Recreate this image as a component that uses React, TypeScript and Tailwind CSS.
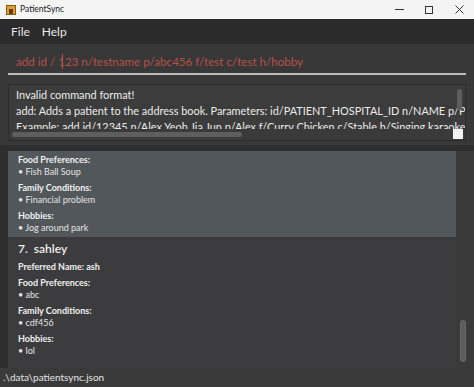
import React from "react";

const font = { fontFamily: 'Lato, "Noto Sans", sans-serif' };

function Field({ label, value }: { label: string; value?: string }) {
  return (
    <div className="mb-[4px]">
      <div className="text-[9px] leading-[12px] font-bold text-[#f0f0f0]">{label}</div>
      {value && <div className="text-[9px] leading-[12px] text-[#e4e4e4]">• {value}</div>}
    </div>
  );
}

export default function App() {
  return (
    <div className="w-[474px] h-[387px] flex flex-col overflow-hidden bg-[#2f2f2f]" style={font}>
      {/* title bar */}
      <div className="h-[19px] bg-[#f4f4f4] flex items-center pl-[6px] shrink-0">
        <div className="w-[10px] h-[10px] bg-[#e0a030] border border-[#8a5a10] flex items-end justify-center">
          <div className="w-[4px] h-[5px] bg-[#6b3d0a]" />
        </div>
        <span className="ml-[4px] text-[8.5px] text-[#1a1a1a]">PatientSync</span>
        <div className="ml-auto flex items-center h-full text-[#222]">
          <div className="w-[30px] flex justify-center">
            <div className="w-[9px] h-px bg-[#333]" />
          </div>
          <div className="w-[30px] flex justify-center">
            <div className="w-[8px] h-[8px] border border-[#333]" />
          </div>
          <div className="w-[30px] flex justify-center">
            <svg width="9" height="9" viewBox="0 0 9 9" stroke="#333" strokeWidth="1">
              <path d="M0.5 0.5 L8.5 8.5 M8.5 0.5 L0.5 8.5" />
            </svg>
          </div>
        </div>
      </div>

      {/* menu */}
      <div className="h-[25px] bg-[#2b2b2b] flex items-center gap-[12px] pl-[11px] text-[12px] text-[#e8e8e8] shrink-0">
        <span>File</span>
        <span>Help</span>
      </div>

      {/* command box */}
      <div className="h-[36px] bg-[#383838] px-[8px] pt-[6px] shrink-0">
        <div className="h-[25px] border-b-2 border-[#bdbdbd] pl-[8px] flex items-center text-[11.6px] text-[#b8504a]">
          <span>add id / 1</span>
          <span className="w-px h-[15px] bg-[#c0504a] -ml-[3px] mr-[2px]" />
          <span>23 n/testname p/abc456 f/test c/test h/hobby</span>
        </div>
      </div>

      {/* result display */}
      <div className="h-[65px] bg-[#383838] px-[8px] pt-[4px] pb-[4px] shrink-0">
        <div className="relative h-full bg-[#3c3c3c] border border-[#2c2c2c] overflow-hidden">
          <div className="pl-[7px] pt-[2px] text-[10.9px] leading-[16px] text-[#ececec] whitespace-nowrap">
            <div>Invalid command format!</div>
            <div>add: Adds a patient to the address book. Parameters: id/PATIENT_HOSPITAL_ID n/NAME p/P</div>
            <div>Example: add id/12345 n/Alex Yeoh Jia Jun p/Alex f/Curry Chicken c/Stable h/Singing karaoke</div>
          </div>
          <div className="absolute left-0 right-0 bottom-0 h-[11px] bg-[#3a3a3a] flex items-center px-[3px]">
            <div className="w-[230px] h-[5px] rounded-full bg-[#5e5e5e]" />
          </div>
          <div className="absolute right-[3px] top-[4px] w-[5px] h-[21px] rounded-full bg-[#5e5e5e]" />
          <div className="absolute right-[2px] bottom-[1px] w-[10px] h-[10px] bg-[#f2f2f2]" />
        </div>
      </div>

      {/* list */}
      <div className="flex-1 min-h-0 bg-[#2e2e2e] pt-[6px] flex">
        <div className="flex-1 pl-[8px] overflow-hidden flex flex-col">
          <div className="bg-[#52575b] pl-[10px] pt-[3px] h-[86px] shrink-0">
            <Field label="Food Preferences:" value="Fish Ball Soup" />
            <Field label="Family Conditions:" value="Financial problem" />
            <Field label="Hobbies:" value="Jog around park" />
          </div>
          <div className="bg-[#3c3c3e] pl-[10px] pt-[3px] flex-1">
            <div className="text-[12px] leading-[17px] font-semibold text-[#f0f0f0] mb-[4px]">
              7.&nbsp;&nbsp;sahley
            </div>
            <div className="text-[9px] leading-[12px] font-bold text-[#f0f0f0] mb-[4px]">Preferred Name: ash</div>
            <Field label="Food Preferences:" value="abc" />
            <Field label="Family Conditions:" value="cdf456" />
            <Field label="Hobbies:" value="lol" />
          </div>
        </div>
        <div className="w-[18px] bg-[#3a3a3a] relative">
          <div className="absolute left-[4px] top-[169px] w-[6px] h-[42px] rounded-full bg-[#5c5c5c] border border-[#6a6a6a]" />
        </div>
      </div>

      {/* status */}
      <div className="h-[19px] bg-[#3a3a3a] flex items-center pl-[3px] text-[10px] text-[#e6e6e6] shrink-0">
        .\data\patientsync.json
      </div>
    </div>
  );
}
